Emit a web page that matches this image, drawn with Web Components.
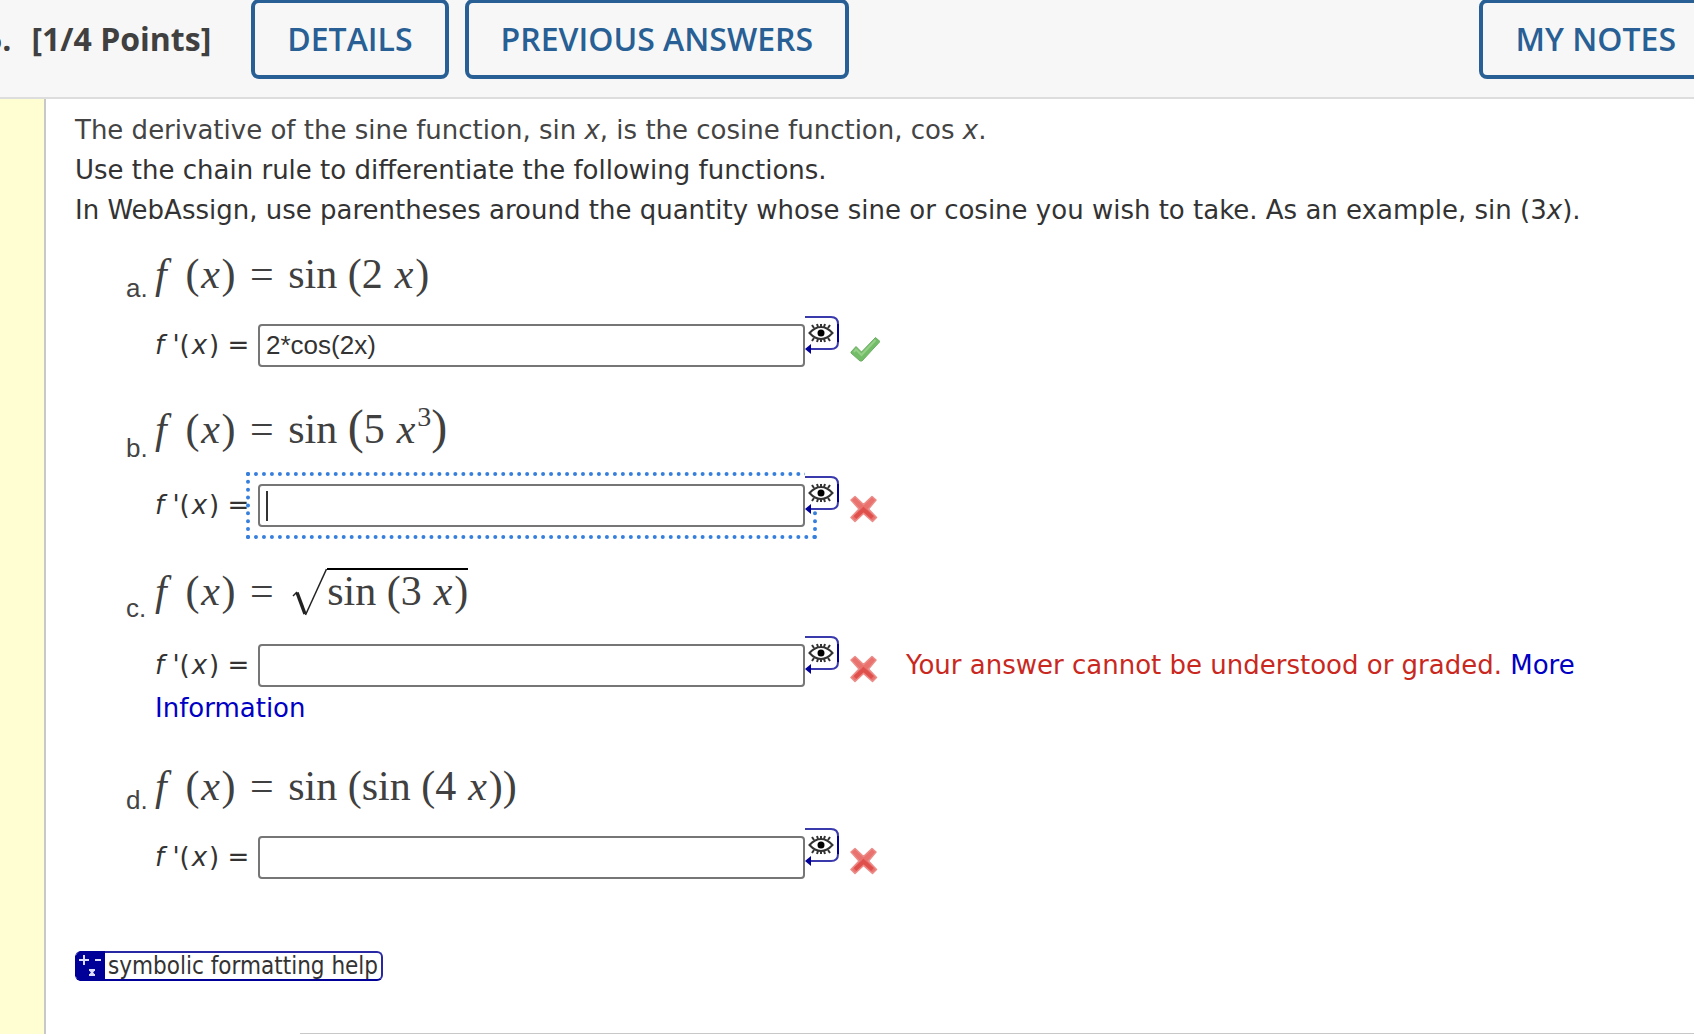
<!DOCTYPE html>
<html lang="en">
<head>
<meta charset="utf-8">
<title>Derivatives of sine</title>
<style>
    body {
        margin: 0;
        background-color: white;
        color: #333333;
        font-family: Verdana, 'DejaVu Sans', sans-serif;
        font-size: 26px;
        line-height: 40px;
    }
</style>
</head>
<body>
<wa-question>
    <wa-header slot="header" number="5." points="[1/4 Points]"></wa-header>
    <wa-prompt></wa-prompt>
    <wa-part letter="a." answer="2*cos(2x)" mark="right">
        <wa-formula slot="formula"><var class="f">f</var> (<var>x</var>) <span class="eq">=</span> sin (2 <var>x</var>)</wa-formula>
    </wa-part>
    <wa-part letter="b." mark="wrong" active>
        <wa-formula slot="formula" depth="superscript"><var class="f">f</var> (<var>x</var>) <span class="eq">=</span> sin <span class="big">(</span>5 <var>x</var><sup>3</sup><span class="big">)</span></wa-formula>
    </wa-part>
    <wa-part letter="c." mark="wrong">
        <wa-formula slot="formula" depth="root"><var class="f">f</var> (<var>x</var>) <span class="eq">=</span> <wa-root>sin (3 <var>x</var>)</wa-root></wa-formula>
        <span slot="message">Your answer cannot be understood or graded.</span>
        <wa-link slot="message">More Information</wa-link>
    </wa-part>
    <wa-part letter="d." mark="wrong">
        <wa-formula slot="formula"><var class="f">f</var> (<var>x</var>) <span class="eq">=</span> sin (sin (4 <var>x</var>))</wa-formula>
    </wa-part>
    <wa-help slot="help">symbolic formatting help</wa-help>
</wa-question>

<script>
function makeTemplate(html) {
    const template = document.createElement('template');
    template.innerHTML = html;
    return template;
}

const questionTemplate = makeTemplate(`
    <style>
        :host {
            display: flex;
            flex-direction: column;
            min-height: 100vh;
            overflow: hidden;
        }

        .body {
            display: flex;
            flex: 1;
        }

        .gutter {
            box-sizing: border-box;
            width: 46px;
            flex: none;
            background-color: #fefed2;
            border-right: 2px solid #c8c8c8;
        }

        .content {
            display: flex;
            flex-direction: column;
            flex: 1;
            min-width: 0;
            padding: 11px 28px 0 29px;
        }

        .parts {
            display: flex;
            flex-direction: column;
            gap: 28px;
            margin-bottom: 67px;
        }

        .rule {
            margin: auto -28px 0 225px;
            border-top: 1px solid #c8c8c8;
        }
    </style>
    <slot name="header"></slot>
    <div class="body">
        <div class="gutter"></div>
        <main class="content">
            <div class="parts"><slot></slot></div>
            <slot name="help"></slot>
            <div class="rule"></div>
        </main>
    </div>
`);

class WaQuestion extends HTMLElement {
    constructor() {
        super();
        this.attachShadow({mode: 'open'}).appendChild(questionTemplate.content.cloneNode(true));
    }
}

const headerTemplate = makeTemplate(`
    <style>
        :host {
            display: block;
            height: 97px;
            background-color: #f7f7f7;
            border-bottom: 2px solid #dddddd;
            color: #404040;
            font: bold 32px/80px 'Open Sans', sans-serif;
        }

        header {
            display: flex;
            margin: -1px -18px 0 -16px;
            white-space: nowrap;
        }

        .points {
            margin: 0 40px 0 20px;
        }

        nav {
            display: flex;
            flex: 1;
            gap: 16px;
        }

        button {
            box-sizing: border-box;
            height: 80px;
            padding: 0 32px 2px;
            background: none;
            border: 4px solid #285f94;
            border-radius: 8px;
            color: #285f94;
            font: 600 32px 'Open Sans', sans-serif;
        }

        .notes {
            margin-left: auto;
        }
    </style>
    <header>
        <span class="number"></span>
        <span class="points"></span>
        <nav>
            <button type="button">DETAILS</button>
            <button type="button">PREVIOUS ANSWERS</button>
            <button type="button" class="notes">MY NOTES</button>
        </nav>
    </header>
`);

class WaHeader extends HTMLElement {
    constructor() {
        super();
        const shadow = this.attachShadow({mode: 'open'});
        shadow.appendChild(headerTemplate.content.cloneNode(true));
        shadow.querySelector('.number').textContent = this.getAttribute('number');
        shadow.querySelector('.points').textContent = this.getAttribute('points');
    }
}

const promptTemplate = makeTemplate(`
    <style>
        :host {
            display: block;
            margin-bottom: -18px;
        }

        p {
            margin: 0;
        }

        .intro {
            color: #444444;
        }
    </style>
    <p class="intro">The derivative of the sine function, sin <i>x</i>, is the cosine function, cos <i>x</i>.</p>
    <p>Use the chain rule to differentiate the following functions.</p>
    <p>In WebAssign, use parentheses around the quantity whose sine or cosine you wish to take. As an example, sin (3<i>x</i>).</p>
`);

class WaPrompt extends HTMLElement {
    constructor() {
        super();
        this.attachShadow({mode: 'open'}).appendChild(promptTemplate.content.cloneNode(true));
    }
}

const formulaTemplate = makeTemplate(`
    <style>
        :host {
            display: block;
            padding-bottom: 6px;
            color: #404040;
            font-family: 'Liberation Serif', serif;
            font-size: 42px;
            line-height: 48px;
            white-space: nowrap;
        }

        :host([depth=superscript]) {
            padding-bottom: 11px;
        }

        :host([depth=root]) {
            padding-bottom: 8px;
        }

        ::slotted(var) {
            display: inline-block;
            min-width: 22px;
            text-align: center;
        }

        ::slotted(.f) {
            min-width: 20px;
            text-align: left;
        }

        ::slotted(.eq) {
            padding: 0 4px;
        }

        ::slotted(.big) {
            font-size: 48px;
            line-height: 0;
        }

        ::slotted(sup) {
            font-size: 28px;
            line-height: 0;
            vertical-align: 17px;
        }
    </style>
    <slot></slot>
`);

class WaFormula extends HTMLElement {
    constructor() {
        super();
        this.attachShadow({mode: 'open'}).appendChild(formulaTemplate.content.cloneNode(true));
    }
}

const rootTemplate = makeTemplate(`
    <style>
        :host {
            margin-left: 4px;
        }

        svg {
            width: 35px;
            height: 48px;
            vertical-align: -11px;
        }

        .radicand {
            display: inline-block;
            border-top: 2px solid black;
            line-height: 42px;
        }

        ::slotted(var) {
            display: inline-block;
            min-width: 22px;
            text-align: center;
        }
    </style>
    <svg viewBox="0 0 35 48" fill="none" stroke="#222222">
        <path d="M1 28 L5 24" stroke-width="1.5"/>
        <path d="M5 24.500 L13 46" stroke-width="3.500"/>
        <path d="M13.500 47 L34.500 1" stroke-width="1.500"/>
    </svg><span class="radicand"><slot></slot></span>
`);

class WaRoot extends HTMLElement {
    constructor() {
        super();
        this.attachShadow({mode: 'open'}).appendChild(rootTemplate.content.cloneNode(true));
    }
}

const linkTemplate = makeTemplate(`
    <style>
        :host {
            display: inline;
        }

        a {
            color: #0000c4;
            text-decoration: none;
        }
    </style>
    <a href="#"><slot></slot></a>
`);

class WaLink extends HTMLElement {
    constructor() {
        super();
        this.attachShadow({mode: 'open'}).appendChild(linkTemplate.content.cloneNode(true));
    }
}

const previewTemplate = makeTemplate(`
    <style>
        :host {
            display: inline-block;
            position: relative;
            z-index: 1;
            width: 34px;
            height: 34px;
            margin-right: 11px;
            background-color: white;
            box-shadow: 0 -4px white;
            vertical-align: 4px;
        }

        button {
            display: block;
            padding: 0;
            background: none;
            border: 0;
        }

        svg {
            display: block;
            overflow: visible;
        }
    </style>
    <button type="button" aria-label="Preview">
        <svg width="34" height="34" viewBox="0 0 34 34" fill="none">
            <path d="M0 1 H26 Q33 1 33 8 V26 Q33 33 26 33 H5" stroke="#3a3aac" stroke-width="2"/>
            <path d="M33 8 V26" stroke="#000098" stroke-width="2"/>
            <path d="M0 33 L6 28 V38 Z" fill="#000098"/>
            <path d="M4.500 17 Q10 11 16 11 Q22 11 27.500 17 Q22 23 16 23 Q10 23 4.500 17 Z" stroke="#333333" stroke-width="2"/>
            <path d="M7 9 L9 12 M12 8 L13 11 M16 8 V11 M20 8 L19 11 M25 9 L23 12 M7 25 L9 22 M12 26 L13 23 M16 26 V23 M20 26 L19 23 M25 25 L23 22" stroke="#333333" stroke-width="2"/>
            <circle cx="16" cy="17" r="3.500" fill="black"/>
        </svg>
    </button>
`);

class WaPreview extends HTMLElement {
    constructor() {
        super();
        this.attachShadow({mode: 'open'}).appendChild(previewTemplate.content.cloneNode(true));
    }
}

const marks = {
    right: `
        <path d="M1 17 L6 11.500 L11.500 17 L25.500 2.500 L30 6.500 L12 26 L10 26 L1 18 Z" fill="#74bd68" stroke="#6aae62" stroke-linejoin="round"/>
        <path d="M4 17 L6 14.500 L11.500 20 L25.500 5" stroke="#95cf88" stroke-width="2" fill="none"/>`,
    wrong: `
        <path d="M1 5 L5 1.500 L13.500 9.500 L22 1.500 L26 5 L18.500 14 L26.500 22.500 L22.500 26.500 L13.500 18.500 L5 26.500 L1 22.500 L9 14 Z" fill="#e9716e" stroke="#ec8c88" stroke-width="1.5" stroke-linejoin="round"/>
        <path d="M5 22.500 L13.500 14.500 L22.500 22.500" stroke="#df504c" stroke-width="4" fill="none"/>`
};

const partTemplate = makeTemplate(`
    <style>
        :host {
            display: block;
            padding-left: 80px;
        }

        .head {
            display: flex;
            align-items: flex-end;
            height: 64px;
            margin: 0 0 11px -29px;
        }

        .letter {
            width: 29px;
            color: #444444;
            font-family: 'Liberation Sans', sans-serif;
            line-height: 32px;
        }

        .answer {
            line-height: 32px;
        }

        label {
            display: inline-block;
            min-width: 103px;
            color: #333333;
            white-space: nowrap;
        }

        .x {
            padding: 0 2px;
        }

        .field {
            display: inline-block;
            margin: 9px 0 5px;
        }

        input {
            box-sizing: border-box;
            width: 547px;
            height: 43px;
            padding: 0 6px;
            background-color: white;
            border: 2px solid #767676;
            border-radius: 4px;
            color: #333333;
            font: 26px 'Liberation Sans', sans-serif;
            vertical-align: baseline;
        }

        /* the part being edited carries its ring and caret without waiting for a click */
        :host([active]) .field {
            outline: 4px dotted #377fdd;
            outline-offset: 8px;
        }

        :host([active]) input {
            background: linear-gradient(#333333, #333333) 6px 5px / 2px 30px no-repeat;
            outline: none;
        }

        .mark {
            margin-right: 26px;
            vertical-align: -11px;
        }

        .message {
            color: #c9281e;
        }
    </style>
    <div class="head">
        <span class="letter"></span>
        <slot name="formula"></slot>
    </div>
    <div class="answer"><label for="answer"><i>f</i> '(<i class="x">x</i>) =</label><span class="field"><input id="answer" type="text" autocomplete="off"></span><wa-preview></wa-preview><svg class="mark" width="30" height="30" viewBox="0 0 30 30"></svg><span class="message"><slot name="message"></slot></span></div>
`);

class WaPart extends HTMLElement {
    constructor() {
        super();
        const shadow = this.attachShadow({mode: 'open'});
        shadow.appendChild(partTemplate.content.cloneNode(true));
        shadow.querySelector('.letter').textContent = this.getAttribute('letter');
        shadow.querySelector('input').value = this.getAttribute('answer') || '';
        shadow.querySelector('.mark').innerHTML = marks[this.getAttribute('mark')];

        // keep a space between the sentence and the link that follows it
        const messages = this.querySelectorAll('[slot=message]');
        if (messages.length > 1) {
            messages[0].append(' ');
        }
    }
}

const helpTemplate = makeTemplate(`
    <style>
        :host {
            display: flex;
        }

        a {
            display: flex;
            box-sizing: border-box;
            height: 30px;
            padding-right: 3px;
            border: 2px solid #2828a4;
            border-left: 0;
            border-bottom-color: #000098;
            border-radius: 6px;
            color: #333333;
            font: 24px/26px 'DejaVu Sans Condensed', 'DejaVu Sans', sans-serif;
            text-decoration: none;
            white-space: nowrap;
        }

        svg {
            margin: -2px 3px -2px 0;
            flex: none;
        }
    </style>
    <a href="#">
        <svg width="30" height="30" viewBox="0 0 30 30">
            <path d="M5 0 H30 V30 H5 L0 25 V5 Z" fill="#000098"/>
            <path d="M4 9 H14 M9 4 V14 M20 9 H26 M14 19 H20 M14 24 H20 M15 19 L19 24 M19 19 L15 24" stroke="#dcdcff" stroke-width="2"/>
        </svg>
        <slot></slot>
    </a>
`);

class WaHelp extends HTMLElement {
    constructor() {
        super();
        this.attachShadow({mode: 'open'}).appendChild(helpTemplate.content.cloneNode(true));
    }
}

customElements.define('wa-question', WaQuestion);
customElements.define('wa-header', WaHeader);
customElements.define('wa-prompt', WaPrompt);
customElements.define('wa-formula', WaFormula);
customElements.define('wa-root', WaRoot);
customElements.define('wa-link', WaLink);
customElements.define('wa-preview', WaPreview);
customElements.define('wa-part', WaPart);
customElements.define('wa-help', WaHelp);
</script>
</body>
</html>
